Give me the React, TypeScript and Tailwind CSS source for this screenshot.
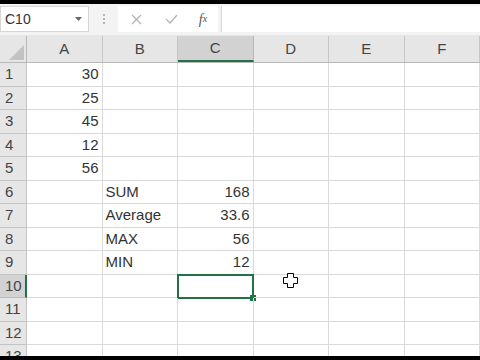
const cols = ['A', 'B', 'C', 'D', 'E', 'F'];

type Row = { n: number; a?: string; b?: string; c?: string };

const rows: Row[] = [
  { n: 1, a: '30' },
  { n: 2, a: '25' },
  { n: 3, a: '45' },
  { n: 4, a: '12' },
  { n: 5, a: '56' },
  { n: 6, b: 'SUM', c: '168' },
  { n: 7, b: 'Average', c: '33.6' },
  { n: 8, b: 'MAX', c: '56' },
  { n: 9, b: 'MIN', c: '12' },
  { n: 10 },
  { n: 11 },
  { n: 12 },
  { n: 13 },
];

const Cell = ({ text, align, selected }: { text?: string; align: 'left' | 'right'; selected?: boolean }) => (
  <div
    className={`relative w-[75.5px] shrink-0 h-full border-r border-b border-[#dadada] flex items-center ${
      align === 'right' ? 'justify-end pr-[3px]' : 'justify-start pl-[3px]'
    }`}
  >
    {text}
    {selected && (
      <div className="absolute left-[-1px] top-[-1px] w-[77px] h-[25px] border-2 border-[#217346]">
        <div className="absolute right-[-4px] bottom-[-4px] w-[6px] h-[6px] bg-[#217346] border border-[#217346]" />
      </div>
    )}
  </div>
);

const App = () => {
  return (
    <div
      className="w-[480px] h-[360px] overflow-hidden bg-white relative flex flex-col text-[15px] text-[#333]"
      style={{ fontFamily: '"Liberation Sans", Arial, sans-serif' }}
    >
      <div className="h-[4px] bg-black shrink-0" />

      {/* formula bar */}
      <div className="h-[31px] shrink-0 bg-[#f3f3f3] flex items-center pt-[2px] pb-[3px]">
        <div className="w-[89px] h-full bg-white border border-[#d6d6d6] flex items-center justify-between pl-[4px] pr-[6px] text-[14px] text-[#333]">
          <span>C10</span>
          <svg width="7" height="4" viewBox="0 0 7 4">
            <path d="M0 0 L7 0 L3.5 4 Z" fill="#666" />
          </svg>
        </div>
        <div className="w-[29px] h-full flex items-center justify-center">
          <div className="flex flex-col gap-[2px]">
            <div className="w-[2px] h-[2px] bg-[#b5b5b5]" />
            <div className="w-[2px] h-[2px] bg-[#b5b5b5]" />
            <div className="w-[2px] h-[2px] bg-[#b5b5b5]" />
          </div>
        </div>
        <div className="w-[100px] h-full bg-white flex items-center">
          <div className="w-[36px] flex justify-center">
            <svg width="11" height="11" viewBox="0 0 11 11">
              <path d="M1 1 L10 10 M10 1 L1 10" stroke="#b4b4b4" strokeWidth="1.3" />
            </svg>
          </div>
          <div className="w-[34px] flex justify-center">
            <svg width="13" height="10" viewBox="0 0 13 10">
              <path d="M1 5 L5 9 L12 1" stroke="#b4b4b4" strokeWidth="1.3" fill="none" />
            </svg>
          </div>
          <div
            className="w-[30px] flex justify-center text-[14px] italic text-[#555]"
            style={{ fontFamily: '"Liberation Serif", serif' }}
          >
            f<span className="text-[10px] relative top-[2px]">x</span>
          </div>
        </div>
        <div className="w-[3px] h-full" />
        <div className="flex-1 h-full bg-white border-l border-[#d6d6d6]" />
      </div>

      {/* column header */}
      <div className="h-[28px] shrink-0 flex bg-[#e6e6e6] border-b border-[#b8b8b8] pt-[1px]">
        <div className="w-[27px] shrink-0 h-full border-r border-[#b8b8b8] relative">
          <svg className="absolute right-[2px] bottom-[2px]" width="15" height="15" viewBox="0 0 15 15">
            <path d="M15 0 L15 15 L0 15 Z" fill="#c2c2c2" />
          </svg>
        </div>
        {cols.map((c) => (
          <div
            key={c}
            className={`w-[75.5px] shrink-0 h-full flex items-center justify-center text-[#444] border-r ${
              c === 'C' ? 'bg-[#d2d2d2] border-[#b8b8b8] border-b-2 border-b-[#217346]' : 'border-[#c6c6c6]'
            }`}
          >
            {c}
          </div>
        ))}
      </div>

      {/* rows */}
      {rows.map((r) => (
        <div key={r.n} className="h-[23.5px] shrink-0 flex">
          <div
            className={`w-[27px] shrink-0 h-full border-r border-b flex items-center pl-[5px] text-[#444] ${
              r.n === 10 ? 'bg-[#d2d2d2] border-[#b8b8b8] border-r-2 border-r-[#217346]' : 'bg-[#e6e6e6] border-[#c4c4c4]'
            }`}
          >
            {r.n}
          </div>
          <Cell text={r.a} align="right" />
          <Cell text={r.b} align="left" />
          <Cell text={r.c} align="right" selected={r.n === 10} />
          <Cell align="left" />
          <Cell align="left" />
          <Cell align="left" />
        </div>
      ))}

      <div className="absolute left-0 bottom-0 w-full h-[4px] bg-black" />

      {/* mouse cursor */}
      <svg className="absolute left-[283px] top-[273px]" width="15" height="15" viewBox="0 0 15 15">
        <path
          d="M4.5 0.5 H10.5 V4.5 H14.5 V10.5 H10.5 V14.5 H4.5 V10.5 H0.5 V4.5 H4.5 Z"
          fill="white"
          stroke="black"
          strokeWidth="1"
        />
      </svg>
    </div>
  );
};

export default App;
